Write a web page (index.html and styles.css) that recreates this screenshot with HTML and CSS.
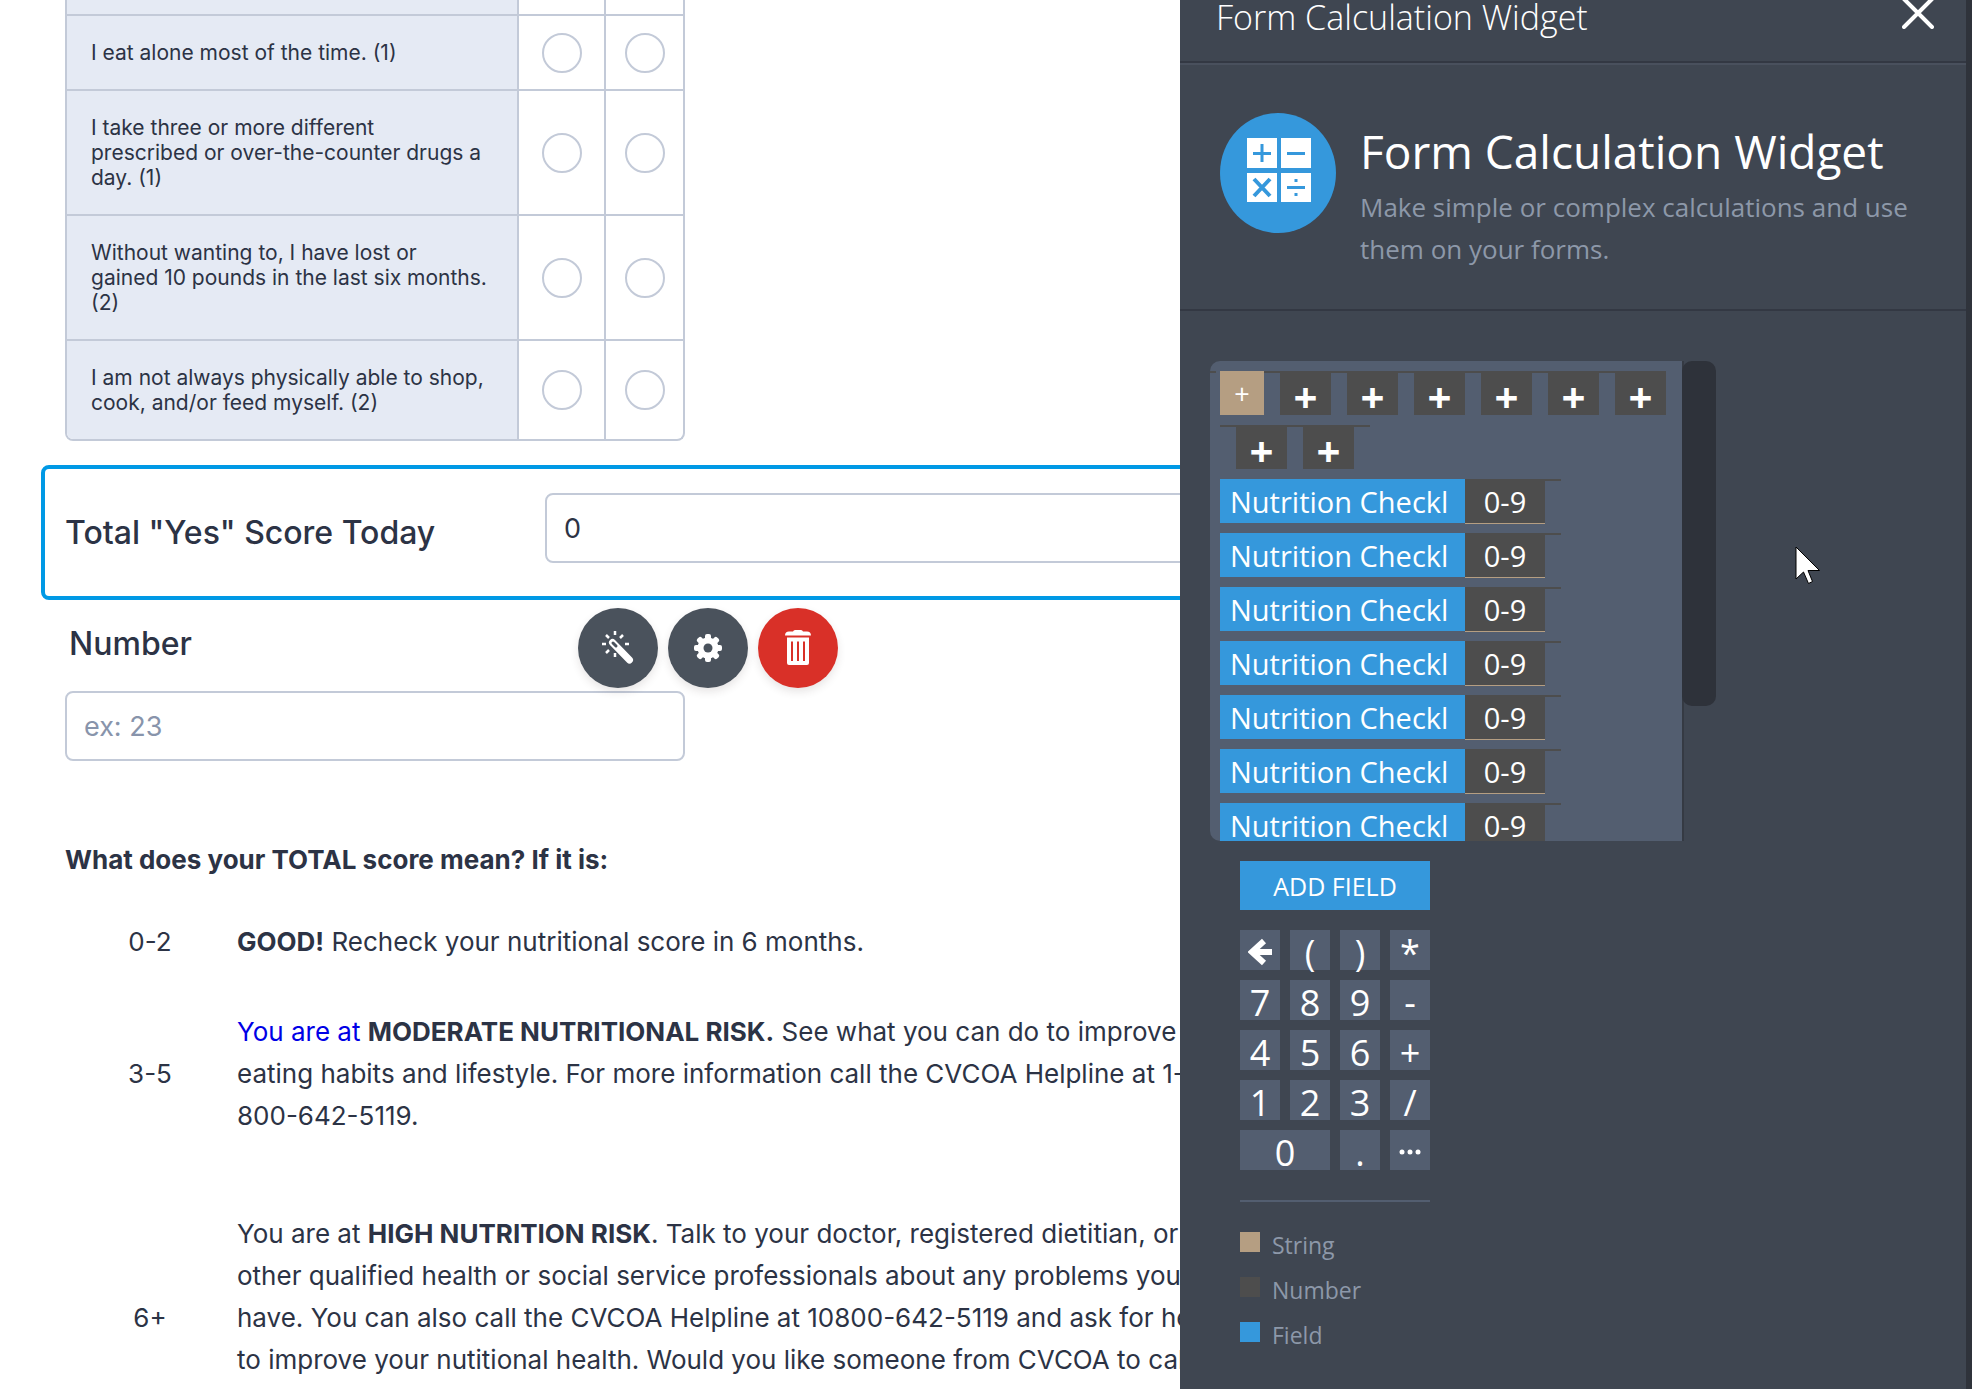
FILE: index.html
```html
<!DOCTYPE html>
<html lang="en">
<head>
    <meta charset="UTF-8">
    <meta name="viewport" content="width=device-width, initial-scale=1.0">
    <title>Form Calculation Widget</title>
    <link rel="stylesheet" href="styles.css">
</head>
<body>
    <main class="form">
        <div class="matrix">
            <table>
                <tr><th></th><td></td><td></td></tr>
                <tr>
                    <th>I eat alone most of the time. (1)</th>
                    <td><input type="radio" name="alone" aria-label="Yes"></td>
                    <td><input type="radio" name="alone" aria-label="No"></td>
                </tr>
                <tr>
                    <th>I take three or more different<br>prescribed or over-the-counter drugs a<br>day. (1)</th>
                    <td><input type="radio" name="drugs" aria-label="Yes"></td>
                    <td><input type="radio" name="drugs" aria-label="No"></td>
                </tr>
                <tr>
                    <th>Without wanting to, I have lost or<br>gained 10 pounds in the last six months.<br>(2)</th>
                    <td><input type="radio" name="weight" aria-label="Yes"></td>
                    <td><input type="radio" name="weight" aria-label="No"></td>
                </tr>
                <tr>
                    <th>I am not always physically able to shop,<br>cook, and/or feed myself. (2)</th>
                    <td><input type="radio" name="shop" aria-label="Yes"></td>
                    <td><input type="radio" name="shop" aria-label="No"></td>
                </tr>
            </table>
        </div>

        <div class="question selected">
            <label for="total">Total "Yes" Score Today</label>
            <input class="text-input" type="text" id="total" value="0">
            <div class="tools">
                <button class="tool" type="button" aria-label="Wizard">
                    <svg width="34" height="34" viewBox="0 0 34 34" fill="none" stroke="#fff">
                        <path d="M11.500 11.500L28.500 29" stroke-width="7" stroke-linecap="round"/>
                        <path d="M12 12L15 15" stroke="#4a525c" stroke-width="3" stroke-linecap="round"/>
                        <path d="M14 0v4M5 4l3 3M22 4l-3 3M1 13h4M24 13h4M5 22l3-3M14 22v4" stroke-width="2.500"/>
                    </svg>
                </button>
                <button class="tool" type="button" aria-label="Properties">
                    <svg width="28" height="28" viewBox="0 0 28 28">
                        <g fill="#fff">
                            <circle cx="14" cy="14" r="10.500"/>
                            <rect x="11" y="0" width="6" height="28" rx="2"/>
                            <rect x="11" y="0" width="6" height="28" rx="2" transform="rotate(45 14 14)"/>
                            <rect x="11" y="0" width="6" height="28" rx="2" transform="rotate(90 14 14)"/>
                            <rect x="11" y="0" width="6" height="28" rx="2" transform="rotate(135 14 14)"/>
                        </g>
                        <circle cx="14" cy="14" r="4.500" fill="#4a525c"/>
                    </svg>
                </button>
                <button class="tool delete" type="button" aria-label="Delete">
                    <svg width="26" height="36" viewBox="0 0 26 36">
                        <path d="M0 5.500C0 3 1.500 1.500 4 1.500H8Q8.500 0 10 0H16Q17.500 0 18 1.500H22C24.500 1.500 26 3 26 5.500ZM2 7.500H24V33Q24 35 22 35H4Q2 35 2 33Z" fill="#fff"/>
                        <path d="M7 11.500V31M13 11.500V31M19 11.500V31" stroke="#d93028" stroke-width="2"/>
                    </svg>
                </button>
            </div>
        </div>

        <div class="question stacked">
            <label for="number">Number</label>
            <input class="text-input" type="text" id="number" placeholder="ex: 23">
        </div>

        <h2>What does your TOTAL score mean? If it is:</h2>
        <table class="scores">
            <tr>
                <td class="range">0-2</td>
                <td><b>GOOD!</b> Recheck your nutritional score in 6 months.</td>
            </tr>
            <tr>
                <td class="range">3-5</td>
                <td><span class="blue">You are at</span> <b>MODERATE NUTRITIONAL RISK.</b> See what you can do to improve your<br>eating habits and lifestyle. For more information call the CVCOA Helpline at 1-<br>800-642-5119.</td>
            </tr>
            <tr>
                <td class="range">6+</td>
                <td>You are at <b>HIGH NUTRITION RISK</b>. Talk to your doctor, registered dietitian, or<br>other qualified health or social service professionals about any problems you<br>have. You can also call the CVCOA Helpline at 10800-642-5119 and ask for help<br>to improve your nutitional health. Would you like someone from CVCOA to call<br>you?</td>
            </tr>
        </table>
    </main>

    <aside class="panel">
        <header class="panel-head">
            <span>Form Calculation Widget</span>
            <button class="close" type="button" aria-label="Close">
                <svg width="32" height="32" viewBox="0 0 32 32"><path d="M2 2L30 30M30 2L2 30" stroke="#fff" stroke-width="4" stroke-linecap="round"/></svg>
            </button>
        </header>

        <section class="widget">
            <svg width="116" height="120" viewBox="0 0 116 120">
                <ellipse cx="58" cy="60" rx="58" ry="60" fill="#3598dc"/>
                <path d="M27 25H57V55H27ZM61 25H91V55H61ZM27 60H57V89H27ZM61 60H91V89H61Z" fill="#fff"/>
                <g stroke="#3598dc" stroke-width="3" fill="none">
                    <path d="M33 40.500H51M42 31V49M67 40.500H85M67 74.500H85M76 66V69M76 80V83"/>
                    <path d="M34 66L50 83M50 66L34 83" stroke-width="4"/>
                </g>
            </svg>
            <div>
                <h1>Form Calculation Widget</h1>
                <p>Make simple or complex calculations and use<br>them on your forms.</p>
            </div>
        </section>

        <section class="calc">
            <div class="editor-wrap">
                <div class="editor">
                    <div class="row first">
                        <span class="chip string">+</span>
                        <span class="op"><b>+</b></span>
                        <span class="op"><b>+</b></span>
                        <span class="op"><b>+</b></span>
                        <span class="op"><b>+</b></span>
                        <span class="op"><b>+</b></span>
                        <span class="op"><b>+</b></span>
                    </div>
                    <div class="row">
                        <span class="op"><b>+</b></span>
                        <span class="op"><b>+</b></span>
                        <span class="tail"></span>
                    </div>
                    <div class="row"><span class="chip field">Nutrition Checkl</span><span class="chip number">0-9</span><span class="tail"></span></div>
                    <div class="row"><span class="chip field">Nutrition Checkl</span><span class="chip number">0-9</span><span class="tail"></span></div>
                    <div class="row"><span class="chip field">Nutrition Checkl</span><span class="chip number">0-9</span><span class="tail"></span></div>
                    <div class="row"><span class="chip field">Nutrition Checkl</span><span class="chip number">0-9</span><span class="tail"></span></div>
                    <div class="row"><span class="chip field">Nutrition Checkl</span><span class="chip number">0-9</span><span class="tail"></span></div>
                    <div class="row"><span class="chip field">Nutrition Checkl</span><span class="chip number">0-9</span><span class="tail"></span></div>
                    <div class="row"><span class="chip field">Nutrition Checkl</span><span class="chip number">0-9</span><span class="tail"></span></div>
                </div>
                <div class="handle"></div>
            </div>

            <div class="controls">
                <button class="add" type="button">ADD FIELD</button>
                <div class="keypad">
                    <button class="key icon" type="button" aria-label="Back">
                        <svg width="24" height="28" viewBox="0 0 24 28"><path d="M16 3L4 14L16 25M6 14H24" fill="none" stroke="#fff" stroke-width="6"/></svg>
                    </button>
                    <button class="key" type="button">(</button>
                    <button class="key" type="button">)</button>
                    <button class="key" type="button">*</button>
                    <button class="key" type="button">7</button>
                    <button class="key" type="button">8</button>
                    <button class="key" type="button">9</button>
                    <button class="key" type="button">-</button>
                    <button class="key" type="button">4</button>
                    <button class="key" type="button">5</button>
                    <button class="key" type="button">6</button>
                    <button class="key" type="button">+</button>
                    <button class="key" type="button">1</button>
                    <button class="key" type="button">2</button>
                    <button class="key" type="button">3</button>
                    <button class="key" type="button">/</button>
                    <button class="key zero" type="button">0</button>
                    <button class="key" type="button">.</button>
                    <button class="key icon" type="button" aria-label="More">
                        <svg width="22" height="6" viewBox="0 0 22 6" fill="#fff"><circle cx="3" cy="3" r="2.500"/><circle cx="11" cy="3" r="2.500"/><circle cx="19" cy="3" r="2.500"/></svg>
                    </button>
                </div>
                <ul class="legend">
                    <li class="l-string">String</li>
                    <li class="l-number">Number</li>
                    <li class="l-field">Field</li>
                </ul>
            </div>
        </section>
    </aside>

    <svg class="cursor" width="26" height="40" viewBox="0 0 26 40"><path d="M1 1V33L8.500 26L13.500 37.500L17.500 35.500L13 24.500H24.500Z" fill="#fff" stroke="#000" stroke-width="1"/></svg>
</body>
</html>
```
FILE: styles.css
```css
* {
    box-sizing: border-box;
}

body {
    margin: 0;
    height: 100vh;
    overflow: hidden;
    position: relative;
    background: #fff;
    color: #2c3345;
    font-family: Inter, "Liberation Sans", sans-serif;
}

button {
    border: none;
    padding: 0;
    cursor: pointer;
}

svg {
    display: block;
    flex: none;
}

/* form */
.form {
    padding-left: 65px;
}

.matrix {
    width: 620px;
    border: 2px solid #c3cad8;
    border-top: none;
    border-radius: 0 0 8px 8px;
    overflow: hidden;
}

.matrix table {
    width: 100%;
    border-spacing: 0;
    table-layout: fixed;
}

.matrix th {
    width: 452px;
    padding: 24px;
    background: #e5eaf4;
    font-size: 21px;
    line-height: 25px;
    font-weight: 400;
    text-align: left;
    white-space: nowrap;
}

.matrix th, .matrix td {
    border-right: 2px solid #c3cad8;
    border-bottom: 2px solid #c3cad8;
}

.matrix td {
    width: 87px;
    padding: 0;
    text-align: center;
}

.matrix td:last-child {
    width: auto;
    border-right: none;
}

.matrix tr:last-child > * {
    border-bottom: none;
}

.matrix tr:first-child th {
    height: 16px;
    padding: 0;
}

.matrix input {
    appearance: none;
    display: block;
    width: 40px;
    height: 40px;
    margin: 0 auto;
    border: 2px solid #c3cad8;
    border-radius: 50%;
    background: #fff;
}

.question label {
    font-size: 32px;
    line-height: 40px;
    font-weight: 500;
}

.text-input {
    height: 70px;
    padding: 0 17px;
    border: 2px solid #c3cad8;
    border-radius: 8px;
    background: #fff;
    color: #2c3345;
    font: 27px Inter, "Liberation Sans", sans-serif;
}

.text-input::placeholder {
    color: #8894ab;
}

.selected {
    position: relative;
    display: flex;
    margin: 24px 0 0 -24px;
    padding: 24px 20px 33px;
    border: 4px solid #0099e5;
    border-radius: 8px;
}

.selected label {
    flex: 0 0 480px;
    padding-top: 20px;
}

.selected .text-input {
    flex: 1;
    min-width: 0;
}

.tools {
    position: absolute;
    top: 139px;
    left: 533px;
    display: flex;
    gap: 10px;
}

.tool {
    width: 80px;
    height: 80px;
    display: flex;
    align-items: center;
    justify-content: center;
    border-radius: 50%;
    background: #4a525c;
    box-shadow: 0 4px 8px rgba(60, 40, 40, 0.12);
}

.delete {
    background: #d93028;
}

.stacked {
    width: 620px;
    display: flex;
    flex-direction: column;
    margin-top: 24px;
    gap: 27px;
}

.stacked label {
    padding-left: 4px;
}

.form h2 {
    margin: 78px 0 40px;
    font-size: 26px;
    line-height: 42px;
    font-weight: 700;
}

.scores {
    border-spacing: 0;
    font-size: 26px;
    line-height: 42px;
    font-weight: 400;
    white-space: nowrap;
}

.scores td {
    padding: 0 0 48px;
}

.scores tr + tr td {
    padding-bottom: 76px;
}

.scores .range {
    width: 172px;
    padding-right: 2px;
    text-align: center;
}

.scores b {
    font-weight: 700;
}

.blue {
    color: #0000e6;
}

/* widget settings panel */
.panel {
    position: absolute;
    top: 0;
    right: 0;
    bottom: 0;
    width: 792px;
    border-right: 6px solid #2f333b;
    background: #3f4651;
    color: #fff;
    font-family: "Open Sans", "Noto Sans", sans-serif;
}

.panel-head {
    display: flex;
    justify-content: space-between;
    height: 63px;
    padding: 0 32px 0 36px;
    border-bottom: 2px solid #333843;
    font-size: 34px;
    line-height: 34px;
    font-weight: 300;
}

.close {
    height: 29px;
    display: flex;
    align-items: flex-end;
    background: none;
}

.widget {
    display: flex;
    gap: 24px;
    height: 248px;
    padding: 48px 32px 0 40px;
    border-top: 2px solid #49505d;
    border-bottom: 2px solid #333843;
}

.widget h1 {
    margin: 6px 0 3px;
    font-size: 46px;
    line-height: 64px;
    font-weight: 400;
}

.widget p {
    margin: 0;
    color: #8d98a9;
    font-size: 26px;
    line-height: 42px;
}

.calc {
    padding: 50px 30px 0;
}

.editor-wrap {
    display: flex;
    align-items: flex-start;
}

.editor {
    width: 474px;
    height: 480px;
    padding: 10px 0 0 10px;
    overflow: hidden;
    border-right: 2px solid #353a43;
    border-radius: 10px 0 0 10px;
    background: #535e70;
}

.handle {
    width: 34px;
    height: 345px;
    margin-left: -2px;
    border-radius: 10px;
    background: #2e323a;
}

.row {
    display: flex;
    height: 44px;
    margin-bottom: 10px;
    font-size: 29px;
    line-height: 46px;
}

.first {
    margin-left: -10px;
}

.first::before {
    content: "";
    width: 6px;
    height: 2px;
    margin-right: 4px;
    background: #4d4d4d;
}

.chip {
    height: 44px;
    text-align: center;
}

.string {
    width: 44px;
    background: #b59e82;
    font-size: 27px;
}

.field {
    width: 245px;
    padding-left: 10px;
    background: #3598dc;
    text-align: left;
}

.number {
    width: 80px;
    height: 45px;
    border-bottom: 1px solid #b59e82;
    background: #4d4d4d;
}

.op {
    padding-left: 16px;
    border-top: 2px solid #4d4d4d;
}

.op b {
    display: block;
    width: 51px;
    height: 42px;
    background: #4d4d4d;
    font-size: 42px;
    line-height: 48px;
    text-align: center;
}

.tail {
    width: 16px;
    height: 2px;
    background: #4d4d4d;
}

.controls {
    width: 190px;
    margin: 20px 0 0 30px;
}

.add {
    width: 100%;
    height: 49px;
    background: #3598dc;
    color: #fff;
    font: 25px "Open Sans", "Noto Sans", sans-serif;
}

.keypad {
    display: grid;
    grid-template-columns: repeat(4, 1fr);
    grid-auto-rows: 40px;
    gap: 10px;
    margin-top: 20px;
    padding-bottom: 30px;
    border-bottom: 2px solid #535e70;
}

.key {
    display: flex;
    align-items: center;
    justify-content: center;
    padding-top: 6px;
    background: #535e70;
    color: #fff;
    font: 36px/40px "Open Sans", "Noto Sans", sans-serif;
}

.icon {
    padding-top: 4px;
}

.zero {
    grid-column: span 2;
}

.legend {
    margin: 30px 0 0;
    padding: 0;
    list-style: none;
    color: #8d98a9;
    font-size: 23px;
    line-height: 27px;
}

.legend li {
    display: flex;
    gap: 12px;
    margin-bottom: 18px;
}

.legend li::before {
    content: "";
    width: 20px;
    height: 20px;
    background: #3598dc;
}

.legend .l-string::before {
    background: #b59e82;
}

.legend .l-number::before {
    background: #4d4d4d;
}

.cursor {
    position: absolute;
    top: 546px;
    left: 1795px;
}
```
